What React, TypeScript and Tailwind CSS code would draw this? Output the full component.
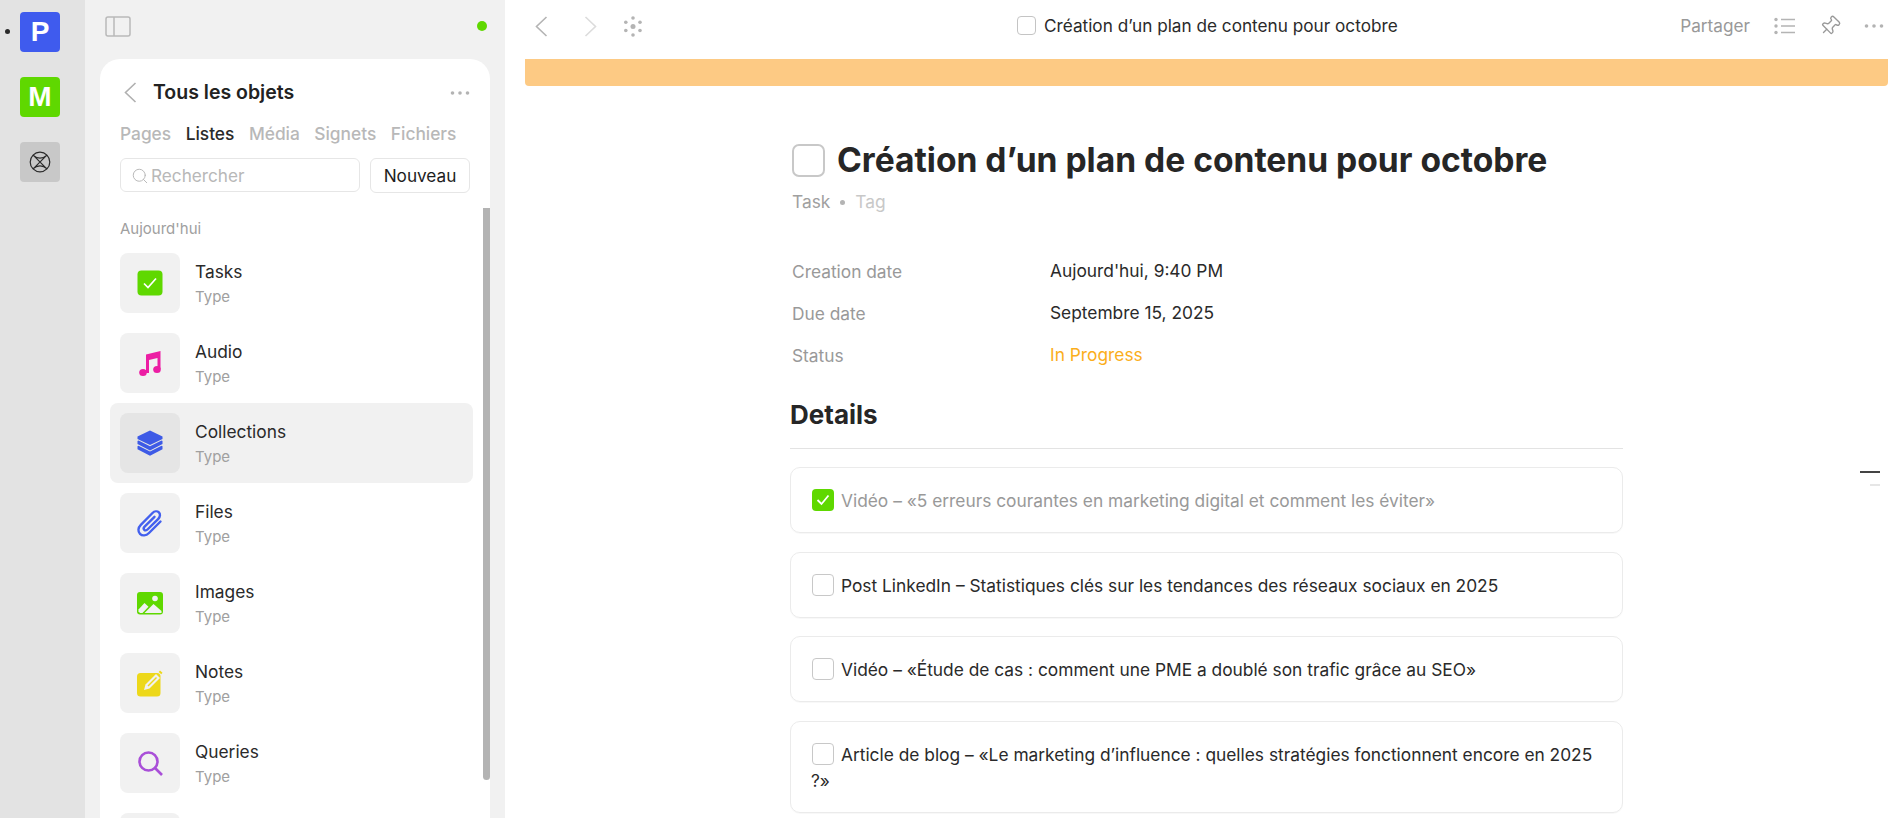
import { ReactNode } from "react";
import { Pin, Search } from "lucide-react";

const Dots = () => (
  <svg width="20" height="6" viewBox="0 0 20 6" className="text-[#b3b3b3]">
    <circle cx="2.5" cy="3" r="1.8" fill="currentColor" />
    <circle cx="10" cy="3" r="1.8" fill="currentColor" />
    <circle cx="17.5" cy="3" r="1.8" fill="currentColor" />
  </svg>
);

const Chevron = ({ right, color }: { right?: boolean; color: string }) => (
  <svg width="13" height="21" viewBox="0 0 13 21" fill="none">
    <path d={right ? "M1.5 1l10 9.5-10 9.5" : "M11.5 1l-10 9.5 10 9.5"} stroke={color} strokeWidth="1.6" />
  </svg>
);

const TaskIcon = () => (
  <svg width="26" height="26" viewBox="0 0 26 26">
    <rect x="0.5" y="0.5" width="25" height="25" rx="4" fill="#5fd800" />
    <path d="M7 13.500l4 4 8-9" fill="none" stroke="#fff" strokeWidth="1.700" />
  </svg>
);

const AudioIcon = () => (
  <svg width="22" height="27" viewBox="0 0 22 27">
    <path d="M7 4.500L21.500 1v18h-3V8L10 10v13H7z" fill="#ec1ea4" />
    <ellipse cx="4" cy="22.500" rx="3.800" ry="3.500" fill="#ec1ea4" />
    <ellipse cx="18" cy="19.500" rx="3.800" ry="3.500" fill="#ec1ea4" />
  </svg>
);

const CollectionIcon = () => (
  <svg width="26" height="26" viewBox="0 0 26 26" fill="#3d5ae6">
    <path d="M13 0.500L25.500 6.500v2.500L13 15 .5 9V6.500z" />
    <path d="M1.500 10.500L13 16.300l11.500-5.800 1 .6v2.900L13 20.500.5 14v-2.900z" />
    <path d="M1.500 15.700L13 21.500l11.500-5.800 1 .6v2.900L13 25.700.5 19.200v-2.900z" />
  </svg>
);

const FileIcon = () => (
  <svg width="26" height="28" viewBox="0 0 26 28" fill="none">
    <path
      d="M23.500 12.500L12 24c-3 3-6.800 3-9 .8s-2.200-6 .8-9L15.500 4c2-2 4.800-2.200 6.400-.6s1.400 4.400-.6 6.400L10.500 20.500c-1 1-2.400 1.100-3.200.3s-.7-2.200.3-3.200L17.500 7.800"
      stroke="#4360ee"
      strokeWidth="2.400"
      strokeLinecap="round"
    />
  </svg>
);

const ImageIcon = () => (
  <svg width="26" height="23" viewBox="0 0 26 23">
    <rect width="26" height="22.500" rx="3" fill="#5fd800" />
    <circle cx="18" cy="6.500" r="2.800" fill="#f1f1f1" />
    <path d="M1.500 19.500v-2l6-6.500 4 3.800-6 6.200H3z" fill="#f1f1f1" />
    <path d="M7.500 21l9-9 8 7v2z" fill="#f1f1f1" />
  </svg>
);

const NoteIcon = () => (
  <svg width="26" height="27" viewBox="0 0 26 27">
    <rect y="3" width="23.500" height="23.500" rx="3.500" fill="#edd81a" />
    <path d="M7 20l1.500-5.500L19 4l4 4-10.500 10.500z" fill="#f1f1f1" />
    <path d="M10.500 15.500l8.500-8.500 1 1-8.500 8.500z" fill="#edd81a" />
    <path d="M23 .5l2.500 2.200-1.300 1.500-2.500-2.300z" fill="#edd81a" />
  </svg>
);

const QueryIcon = () => (
  <svg width="25" height="25" viewBox="0 0 25 25" fill="none">
    <circle cx="10.500" cy="10.500" r="9" stroke="#a94fd8" strokeWidth="2.600" />
    <path d="M17 17l7 7" stroke="#a94fd8" strokeWidth="2.600" />
  </svg>
);

const items: { name: string; icon: ReactNode; active?: boolean }[] = [
  { name: "Tasks", icon: <TaskIcon /> },
  { name: "Audio", icon: <AudioIcon /> },
  { name: "Collections", icon: <CollectionIcon />, active: true },
  { name: "Files", icon: <FileIcon /> },
  { name: "Images", icon: <ImageIcon /> },
  { name: "Notes", icon: <NoteIcon /> },
  { name: "Queries", icon: <QueryIcon /> },
  { name: "", icon: null },
];

const subtasks = [
  { text: "Vidéo – «5 erreurs courantes en marketing digital et comment les éviter»", done: true },
  { text: "Post LinkedIn – Statistiques clés sur les tendances des réseaux sociaux en 2025" },
  { text: "Vidéo – «Étude de cas : comment une PME a doublé son trafic grâce au SEO»" },
  { text: "Article de blog – «Le marketing d’influence : quelles stratégies fonctionnent encore en 2025 ?»" },
];

const props = [
  { label: "Creation date", value: "Aujourd'hui, 9:40 PM", color: "text-[#2a2a2a]" },
  { label: "Due date", value: "Septembre 15, 2025", color: "text-[#2a2a2a]" },
  { label: "Status", value: "In Progress", color: "text-[#fbae1c]" },
];

const Rail = () => (
  <div className="relative flex w-[85px] shrink-0 flex-col gap-[25px] bg-[#e3e3e3] pl-5 pt-3 font-['Liberation_Sans',sans-serif]">
    <div className="absolute left-[5px] top-[29px] h-[5px] w-[5px] rounded-full bg-[#2a2a2a]" />
    <div className="flex h-10 w-10 items-center justify-center rounded bg-[#3f5bee] text-[28px] font-bold text-white">P</div>
    <div className="flex h-10 w-10 items-center justify-center rounded bg-[#5fd800] text-[28px] font-bold text-white">M</div>
    <div className="flex h-10 w-10 items-center justify-center rounded bg-[#c8c8c8]">
      <svg width="22" height="22" viewBox="0 0 22 22" fill="none" stroke="#2a2a2a" strokeWidth="1.200">
        <circle cx="11" cy="11" r="9.800" />
        <path d="M4 4.200c4 3.800 10 3.800 14 0M4 17.800c4-3.800 10-3.800 14 0M4.200 4.200l13.600 13.600M17.800 4.200L4.200 17.800" />
      </svg>
    </div>
  </div>
);

const Sidebar = () => (
  <div className="flex w-[420px] shrink-0 flex-col bg-[#f1f1f1] px-[15px]">
    <div className="flex h-[59px] shrink-0 items-center justify-between pb-[7px] pl-[5px] pr-[3px]">
      <svg width="26" height="21" viewBox="0 0 26 21" fill="none" stroke="#b9b9b9" strokeWidth="1.500">
        <rect x="1" y="1" width="24" height="19" rx="2" />
        <path d="M9 1v19" />
      </svg>
      <div className="h-2.5 w-2.5 rounded-full bg-[#5fd800]" />
    </div>
    <div className="relative flex min-h-0 flex-1 flex-col overflow-hidden rounded-t-[20px] bg-white">
      <div className="flex h-[65px] shrink-0 items-center pl-6 pr-5 pt-0.5">
        <Chevron color="#b0b0b0" />
        <span className="ml-4 text-[19.5px] font-semibold text-[#222]">Tous les objets</span>
        <span className="ml-auto flex"><Dots /></span>
      </div>
      <div className="flex gap-[14.5px] pl-5 text-[17.33px] font-medium leading-5 text-[#b8b8b8]">
        <span>Pages</span>
        <span className="text-[#2a2a2a]">Listes</span>
        <span>Média</span>
        <span>Signets</span>
        <span>Fichiers</span>
      </div>
      <div className="mt-[14px] flex gap-2.5 px-5">
        <div className="flex h-[34px] w-[240px] items-center rounded-md border border-[#e6e6e6] pl-2.5 pt-0.5 text-[17.2px] text-[#b8b8b8]">
          <Search className="mr-[2px] h-[18px] w-[18px]" strokeWidth={1.300} />
          Rechercher
        </div>
        <div className="flex h-[35px] w-[100px] items-center justify-center rounded-md border border-[#e6e6e6] text-[17.2px] text-[#1d1d1d]">Nouveau</div>
      </div>
      <div className="mt-[27px] pl-5 text-[15px] leading-[18px] text-[#a0a0a0]">Aujourd'hui</div>
      <div className="mt-[5px] flex flex-col pl-2.5">
        {items.map((item, i) => (
          <div
            key={i}
            className={`flex h-[80px] w-[363px] shrink-0 items-center gap-[15px] rounded-lg pl-2.5 ${item.active ? "bg-[#f1f1f1]" : ""}`}
          >
            <div className={`flex h-[60px] w-[60px] items-center justify-center rounded-lg ${item.active ? "bg-[#e5e5e5]" : "bg-[#f1f1f1]"}`}>
              {item.icon}
            </div>
            {item.name && (
              <div className="flex flex-col gap-[5px] pt-0.5">
                <span className="text-[17.33px] leading-5 text-[#2a2a2a]">{item.name}</span>
                <span className="text-[15px] leading-5 text-[#a0a0a0]">Type</span>
              </div>
            )}
          </div>
        ))}
      </div>
      <div className="absolute right-0 top-[149px] h-[572px] w-[7px] rounded-b-sm bg-[#b3b3b3]" />
    </div>
  </div>
);

const Toolbar = () => (
  <div className="flex h-[59px] shrink-0 items-center pb-[7px] pl-[30px] pr-[18px]">
    <Chevron color="#b4b4b4" />
    <span className="ml-[36px] flex"><Chevron right color="#dcdcdc" /></span>
    <svg width="20" height="21" viewBox="0 0 20 21" fill="#b4b4b4" className="ml-[26px]">
      <circle cx="10" cy="10.500" r="2.500" />
      <circle cx="10" cy="2" r="1.800" />
      <circle cx="10" cy="19" r="1.800" />
      <circle cx="2.800" cy="6.300" r="1.800" />
      <circle cx="17" cy="6.300" r="1.800" />
      <circle cx="2.800" cy="14.500" r="1.800" />
      <circle cx="17" cy="14.500" r="1.800" />
    </svg>
    <div className="ml-[374px] flex items-center">
      <div className="mr-[8px] h-[19px] w-[19px] rounded-[4px] border border-[#c4c4c4]" />
      <span className="text-[17.2px] text-[#2a2a2a]">Création d’un plan de contenu pour octobre</span>
    </div>
    <span className="ml-auto text-[17.2px] text-[#999]">Partager</span>
    <svg width="22" height="18" viewBox="0 0 22 18" stroke="#b4b4b4" strokeWidth="1.500" className="ml-6">
      <path d="M7 2.500h14M7 9h14M7 15.500h14" />
      <circle cx="2" cy="2.500" r="1.700" fill="#b4b4b4" stroke="none" />
      <circle cx="2" cy="9" r="1.700" fill="#b4b4b4" stroke="none" />
      <circle cx="2" cy="15.500" r="1.700" fill="#b4b4b4" stroke="none" />
    </svg>
    <Pin className="ml-[23px] h-[22px] w-[22px] rotate-45 text-[#999]" strokeWidth={1.500} />
    <span className="ml-[23px] flex"><Dots /></span>
  </div>
);

const Document = () => (
  <div className="ml-[285px] flex w-[833px] flex-col">
    <div className="mt-[51px] flex items-center">
      <div className="ml-[2px] h-[33px] w-[33px] rounded-[7px] border-2 border-[#c8c8c8]" />
      <h1 className="ml-[12px] whitespace-nowrap text-[33.6px] font-bold leading-[46px] text-[#262626]">Création d’un plan de contenu pour octobre</h1>
    </div>
    <div className="ml-[2px] mt-[9px] flex items-center text-[17.33px] leading-5">
      <span className="text-[#a0a0a0]">Task</span>
      <span className="mx-[10px] h-[5px] w-[5px] rounded-full bg-[#b4b4b4]" />
      <span className="text-[#c8c8c8]">Tag</span>
    </div>
    <div className="ml-[2px] mt-[39px] flex flex-col">
      {props.map((p) => (
        <div key={p.label} className="flex h-[42px] items-center text-[17.33px]">
          <span className="w-[258px] text-[#999]">{p.label}</span>
          <span className={`-mt-0.5 ${p.color}`}>{p.value}</span>
        </div>
      ))}
    </div>
    <h2 className="mt-[20px] text-[26px] font-bold leading-9 text-[#262626]">Details</h2>
    <div className="mt-[15px] h-px bg-[#e3e3e3]" />
    <div className="mt-[18px] flex flex-col gap-[18.67px]">
      {subtasks.map((t) => (
        <div key={t.text} className="rounded-[10px] border border-[#ebebeb] px-5 pb-[18px] pt-[20px] text-[17.33px] leading-[26px] shadow-[0_1px_1px_rgba(0,0,0,0.03)]">
          {t.done ? (
            <span className="ml-px mr-[7px] mt-px inline-flex h-[22px] w-[22px] items-center justify-center rounded-[4px] bg-[#5fd800] align-top">
              <svg width="14" height="12" viewBox="0 0 14 12" fill="none">
                <path d="M1.500 6l4 4 7-8.500" stroke="#fff" strokeWidth="1.800" />
              </svg>
            </span>
          ) : (
            <span className="ml-px mr-[7px] mt-px inline-block h-[22px] w-[22px] rounded-[4px] border-[1.5px] border-[#c8c8c8] align-top" />
          )}
          <span className={t.done ? "text-[#999]" : "text-[#2a2a2a]"}>{t.text}</span>
        </div>
      ))}
    </div>
  </div>
);

export default function App() {
  return (
    <div className="flex h-[818px] w-[1902px] overflow-hidden bg-white font-['Inter',sans-serif]">
      <Rail />
      <Sidebar />
      <div className="relative flex min-w-0 flex-1 flex-col overflow-hidden">
        <Toolbar />
        <div className="ml-5 mr-[14px] h-[27px] shrink-0 rounded-b-[4px] bg-[#fdca84]" />
        <Document />
        <div className="absolute right-[22px] top-[471px] h-0.5 w-5 bg-[#444]" />
        <div className="absolute right-[22px] top-[484px] h-0.5 w-2.5 bg-[#e6e6e6]" />
      </div>
    </div>
  );
}
